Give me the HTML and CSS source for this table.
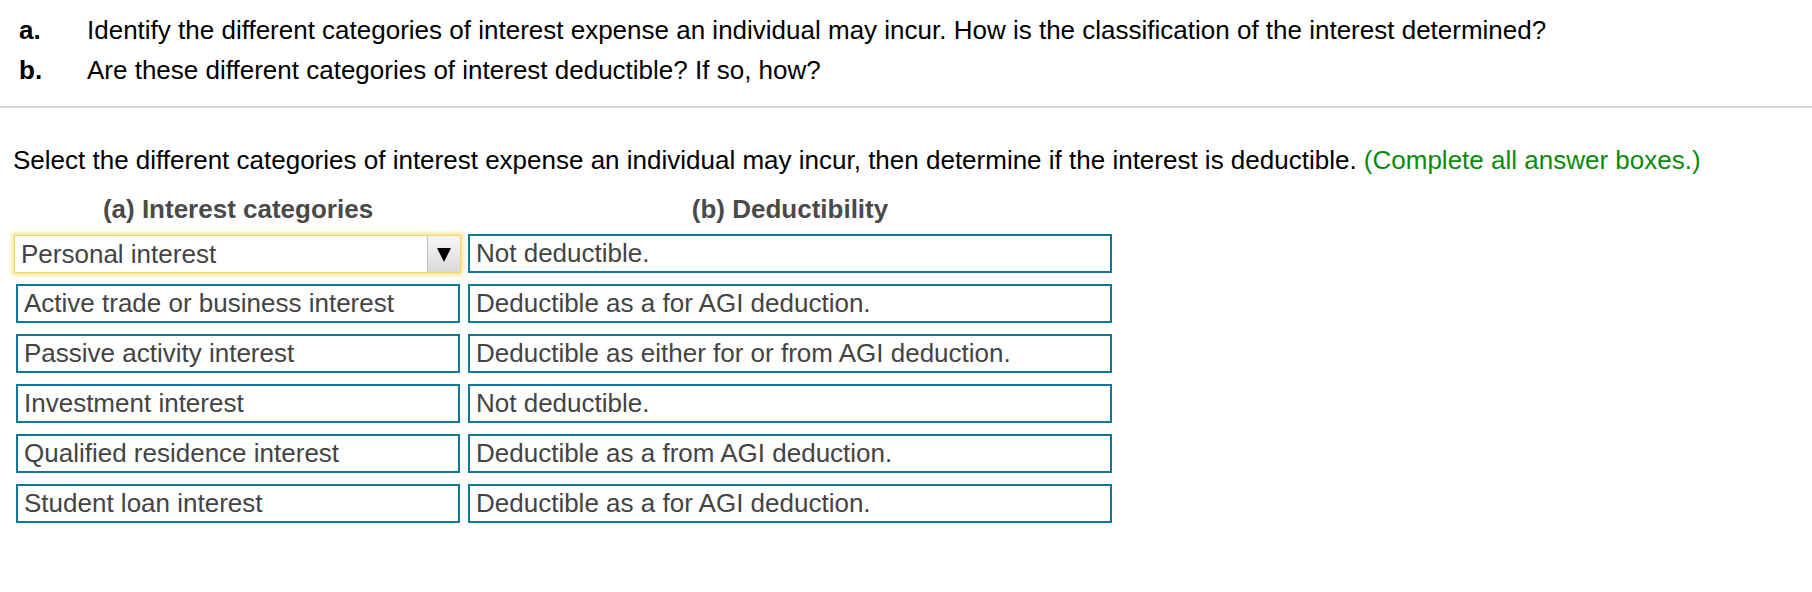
FILE: index.html
```html
<!DOCTYPE html>
<html>
<head>
<meta charset="utf-8">
<link rel="stylesheet" href="styles.css">
</head>
<body>
<div class="questions">
  <div class="q"><span class="q-label">a.</span><span class="q-text">Identify the different categories of interest expense an individual may incur. How is the classification of the interest determined?</span></div>
  <div class="q"><span class="q-label">b.</span><span class="q-text">Are these different categories of interest deductible? If so, how?</span></div>
</div>
<div class="divider"></div>
<p class="prompt">Select the different categories of interest expense an individual may incur, then determine if the interest is deductible. <span class="hint">(Complete all answer boxes.)</span></p>
<div class="answers">
  <div class="col-head">(a) Interest categories</div>
  <div class="col-head">(b) Deductibility</div>

  <div class="select focused"><span class="sel-text">Personal interest</span><span class="sel-btn"><span class="tri"></span></span></div>
  <div class="box">Not deductible.</div>

  <div class="box">Active trade or business interest</div>
  <div class="box">Deductible as a for AGI deduction.</div>

  <div class="box">Passive activity interest</div>
  <div class="box">Deductible as either for or from AGI deduction.</div>

  <div class="box">Investment interest</div>
  <div class="box">Not deductible.</div>

  <div class="box">Qualified residence interest</div>
  <div class="box">Deductible as a from AGI deduction.</div>

  <div class="box">Student loan interest</div>
  <div class="box">Deductible as a for AGI deduction.</div>
</div>
</body>
</html>
```
FILE: styles.css
```css
html, body {
  margin: 0;
  padding: 0;
  background: #ffffff;
}
body {
  font-family: "Liberation Sans", Arial, sans-serif;
  font-size: 26px;
  color: #000;
}
.questions {
  padding-top: 10px;
}
.q {
  display: flex;
  height: 40px;
  line-height: 40px;
}
.q-label {
  width: 87px;
  padding-left: 19px;
  box-sizing: border-box;
  font-weight: bold;
  flex: none;
}
.divider {
  margin-top: 16px;
  height: 2px;
  background: #cfd5e1;
}
.prompt {
  margin: 37px 0 0 13px;
  line-height: 30px;
}
.hint {
  color: #0a8a0a;
}
.answers {
  margin: 19px 0 0 16px;
  display: grid;
  grid-template-columns: 444px 644px;
  column-gap: 8px;
  row-gap: 11px;
}
.col-head {
  text-align: center;
  font-weight: bold;
  color: #4a4a4a;
  line-height: 30px;
  margin-bottom: -1px;
}
.box {
  height: 39px;
  box-sizing: border-box;
  border: 2px solid #0f7896;
  color: #444;
  padding: 0 6px;
  line-height: 35px;
  white-space: nowrap;
}
.select {
  height: 38px;
  margin: 1px -1px 0 -2px;
  box-sizing: border-box;
  border: 1px solid #f2d66a;
  box-shadow: 0 0 4px 2px #fbe38a;
  display: flex;
  align-items: stretch;
  background: #fff;
  color: #444;
}
.sel-text {
  flex: 1;
  padding-left: 6px;
  line-height: 37px;
  white-space: nowrap;
}
.sel-btn {
  width: 32px;
  flex: none;
  background: linear-gradient(#f7f7f7, #d9d9d9);
  border-left: 1px solid #c4c4c4;
  display: flex;
  align-items: center;
  justify-content: center;
}
.tri {
  width: 0;
  height: 0;
  border-left: 7px solid transparent;
  border-right: 7px solid transparent;
  border-top: 14px solid #000;
  margin-top: 2px;
}
```
